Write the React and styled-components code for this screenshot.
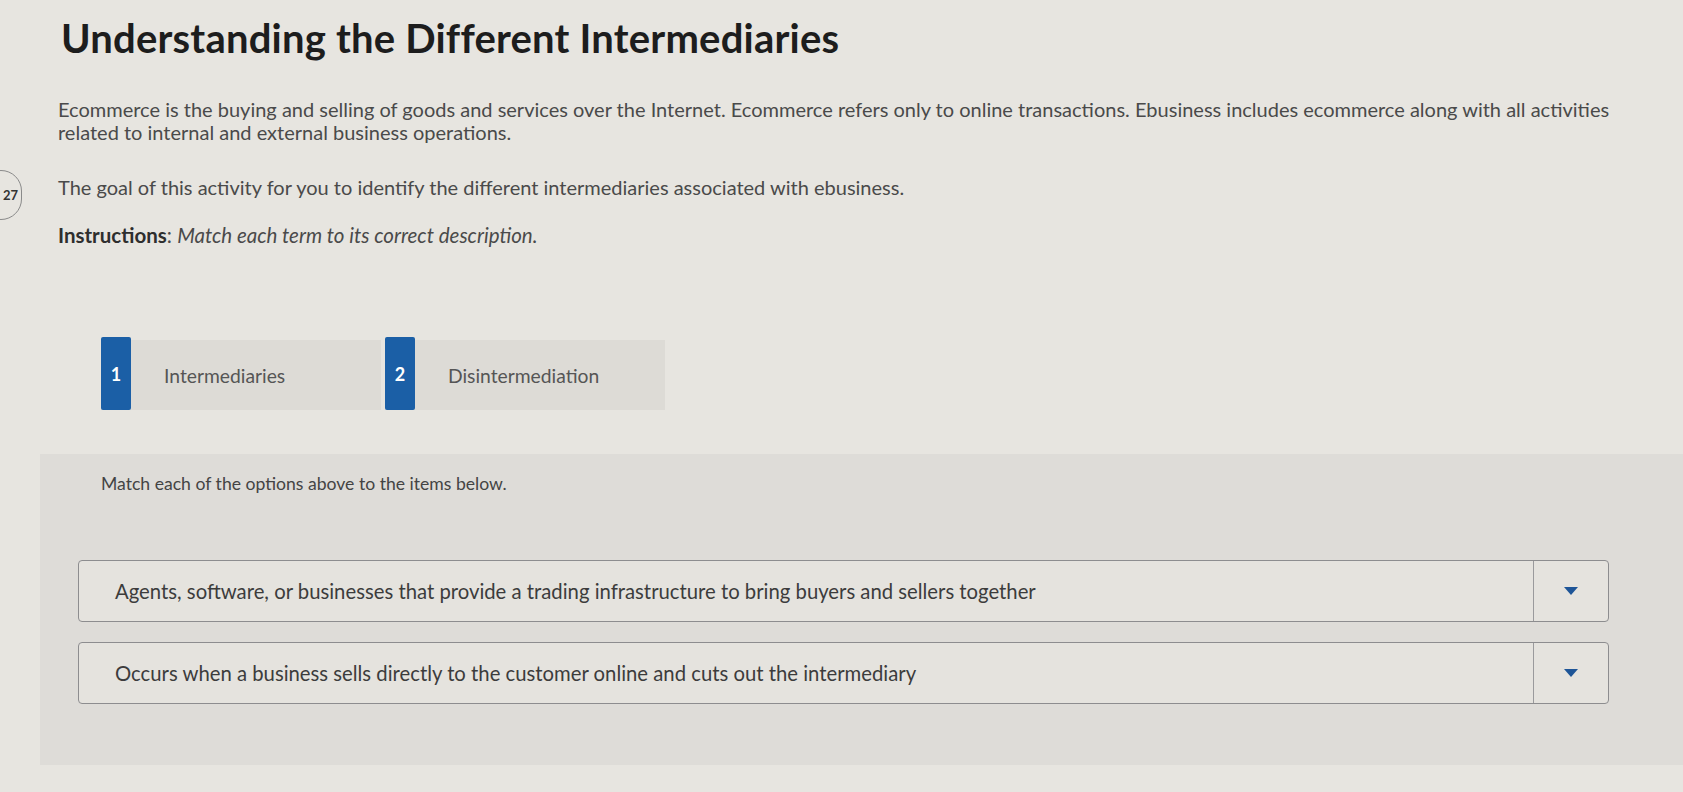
import styled, { createGlobalStyle } from "styled-components";

const GlobalStyle = createGlobalStyle`
    html, body {
        margin: 0;
        padding: 0;
        background: #e6e4df;
    }
    body {
        font-family: Lato, "Open Sans", "Liberation Sans", sans-serif;
        color: #3a3a3a;
        overflow: hidden;
    }
`;

const Page = styled.div`
    position: relative;
    width: 1683px;
    height: 792px;
    overflow: hidden;
    background: #e7e5e0;
`;

const SideBadge = styled.div`
    position: absolute;
    left: -20px;
    top: 170px;
    width: 42px;
    height: 50px;
    border: 1.5px solid #8a8a8a;
    border-radius: 24px;
    display: flex;
    align-items: center;
    justify-content: flex-end;
    padding-right: 3px;
    box-sizing: border-box;
    font-size: 13px;
    font-weight: 700;
    color: #333;
`;

const Content = styled.div`
    padding: 12px 0 0 58px;
`;

const Title = styled.h1`
    margin: 0 0 0 3px;
    font-size: 40px;
    line-height: 52px;
    font-weight: 700;
    color: #1d1d1d;
    letter-spacing: 0.2px;
`;

const Paragraph = styled.p`
    margin: ${(p) => p.$top || 0}px 0 0;
    width: 1580px;
    font-size: ${(p) => p.$size || 20}px;
    line-height: 23px;
    color: #4a4a4a;
`;

const Label = styled.span`
    font-weight: 700;
    color: #2e2e2e;
`;

const Italic = styled.em`
    font-style: italic;
    color: #4a4a4a;
`;

const TermRow = styled.div`
    display: flex;
    gap: 4px;
    margin: 93px 0 0 43px;
`;

const TermCard = styled.div`
    display: flex;
    align-items: stretch;
    width: 280px;
    height: 70px;
    background: #dddbd6;
`;

const TermTab = styled.div`
    width: 30px;
    flex-shrink: 0;
    display: flex;
    align-items: center;
    justify-content: center;
    background: #1b5fa6;
    color: #fff;
    font-weight: 700;
    font-size: 18px;
    border-radius: 2px;
    margin: -3px 0 0;
`;

const TermText = styled.div`
    display: flex;
    align-items: center;
    padding-left: 33px;
    font-size: 19.3px;
    color: #555;
`;

const MatchPanel = styled.section`
    margin: 44px 0 0 40px;
    padding: 18px 0 61px 38px;
    background: #dedcd8;
`;

const PanelHeading = styled.div`
    margin-left: 23px;
    font-size: 17.6px;
    line-height: 24px;
    color: #444;
`;

const DropdownList = styled.div`
    display: flex;
    flex-direction: column;
    gap: 20px;
    margin-top: 64px;
    width: 1531px;
`;

const Dropdown = styled.div`
    display: flex;
    height: 62px;
    border: 1.5px solid #8d8d8f;
    border-radius: 4px;
    background: #e5e3de;
    box-sizing: border-box;
`;

const DropdownText = styled.div`
    flex: 1;
    display: flex;
    align-items: center;
    padding-left: 36px;
    font-size: 20.3px;
    color: #3c3c3c;
`;

const DropdownToggle = styled.div`
    width: 74px;
    display: flex;
    align-items: center;
    justify-content: center;
    border-left: 1.5px solid #9a9a9c;
`;

const Caret = () => (
    <svg width="14" height="8" viewBox="0 0 14 8">
        <path d="M0 0 H14 L7 8 Z" fill="#1e5597" />
    </svg>
);

const terms = [
    { id: 1, name: "Intermediaries" },
    { id: 2, name: "Disintermediation" },
];

const items = [
    "Agents, software, or businesses that provide a trading infrastructure to bring buyers and sellers together",
    "Occurs when a business sells directly to the customer online and cuts out the intermediary",
];

const App = () => {
    return (
        <Page>
            <GlobalStyle />
            <SideBadge>27</SideBadge>
            <Content>
                <Title>Understanding the Different Intermediaries</Title>
                <Paragraph $top={34}>
                    Ecommerce is the buying and selling of goods and services over the Internet. Ecommerce refers only
                    to online transactions. Ebusiness includes ecommerce along with all activities related to internal
                    and external business operations.
                </Paragraph>
                <Paragraph $top={32}>
                    The goal of this activity for you to identify the different intermediaries associated with ebusiness.
                </Paragraph>
                <Paragraph $top={25} $size={20.5}>
                    <Label>Instructions</Label>: <Italic>Match each term to its correct description.</Italic>
                </Paragraph>
                <TermRow>
                    {terms.map((term) => (
                        <TermCard key={term.id}>
                            <TermTab>{term.id}</TermTab>
                            <TermText>{term.name}</TermText>
                        </TermCard>
                    ))}
                </TermRow>
            </Content>
            <MatchPanel>
                <PanelHeading>Match each of the options above to the items below.</PanelHeading>
                <DropdownList>
                    {items.map((text) => (
                        <Dropdown key={text}>
                            <DropdownText>{text}</DropdownText>
                            <DropdownToggle>
                                <Caret />
                            </DropdownToggle>
                        </Dropdown>
                    ))}
                </DropdownList>
            </MatchPanel>
        </Page>
    );
};

export default App;
